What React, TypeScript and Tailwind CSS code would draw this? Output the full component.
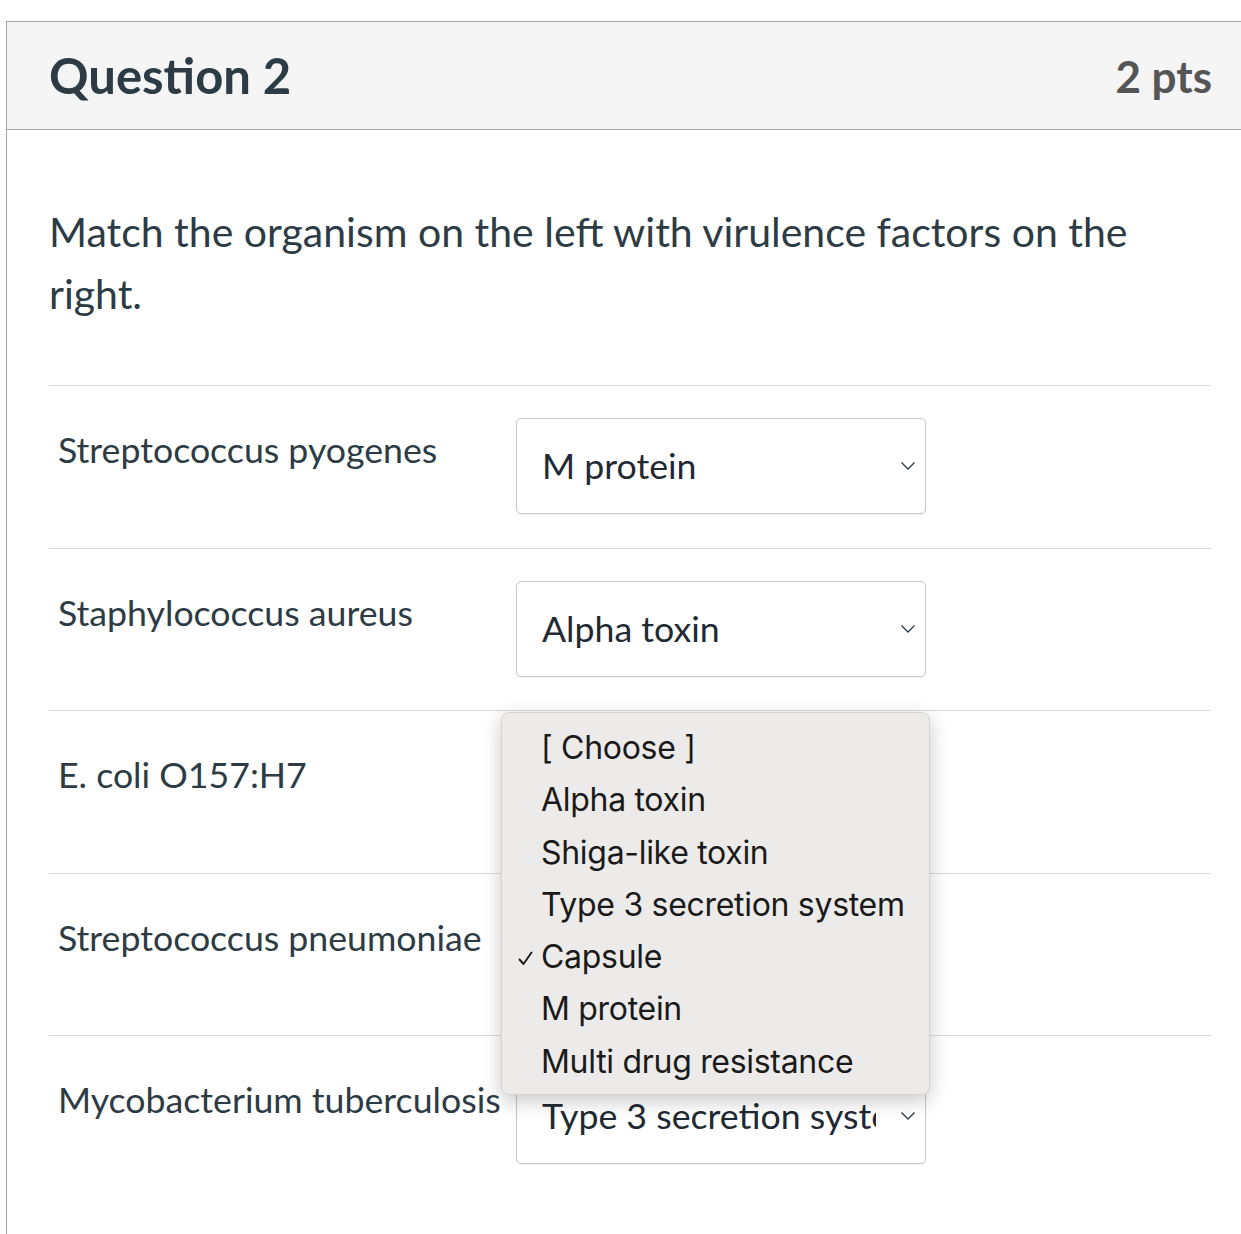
import React from 'react';

const rows = [
  { label: 'Streptococcus pyogenes', value: 'M protein' },
  { label: 'Staphylococcus aureus', value: 'Alpha toxin' },
  { label: 'E. coli O157:H7', value: 'Shiga-like toxin' },
  { label: 'Streptococcus pneumoniae', value: 'Capsule' },
  { label: 'Mycobacterium tuberculosis', value: 'Type 3 secretion system' },
];

const options = [
  '[ Choose ]',
  'Alpha toxin',
  'Shiga-like toxin',
  'Type 3 secretion system',
  'Capsule',
  'M protein',
  'Multi drug resistance',
];

const Chevron = () => (
  <svg className="w-[16px] h-[10px]" viewBox="0 0 16 10" fill="none" stroke="#2d3b45" strokeWidth="1.3">
    <path d="M1.5 1.5 L8 8 L14.5 1.5" />
  </svg>
);

const Menu = () => (
  <div className="absolute left-[-15px] top-[-31px] w-[429px] h-[383px] bg-[#ecebea] rounded-[8px] border border-[#d6d5d4] shadow-[0_6px_20px_rgba(0,0,0,0.22)] pt-[12px] z-10 font-['Inter',sans-serif] text-[32px] text-[#1a1a1a]">
    {options.map((o) => (
      <div key={o} className="relative h-[52.3px] leading-[46px] pl-[39px] tracking-[-0.3px]">
        {o === 'Capsule' && (
          <svg className="absolute left-[16px] top-[17px] w-[15px] h-[15px]" viewBox="0 0 15 15" fill="none" stroke="#1a1a1a" strokeWidth="1.9" strokeLinecap="round" strokeLinejoin="round">
            <path d="M1.5 8.5 L5.5 13 L13.5 1.5" />
          </svg>
        )}
        {o}
      </div>
    ))}
  </div>
);

export default function App() {
  return (
    <div className="bg-white w-[1241px] h-[1234px] overflow-hidden pl-[6px] pt-[21px] font-['Lato',sans-serif] text-[#2d3b45]">
      <div className="border-l border-t border-[#a4a4a4] w-[1260px] h-[1300px]">
        <div className="h-[108px] bg-[#f5f5f5] border-b border-[#a9a9a9] flex items-center justify-between pl-[42px] pr-[56px]">
          <h2 className="text-[49px] font-bold text-[#2d3b45] leading-none">Question 2</h2>
          <span className="text-[44px] font-bold text-[#555555] leading-none w-[200px] text-right mr-[-2px]">2 pts</span>
        </div>
        <div className="pl-[42px] w-[1204px]">
          <p className="pt-[71px] max-w-[1140px] text-[41px] leading-[62px] text-[#2d3b45]">
            Match the organism on the left with virulence factors on the right.
          </p>
          <div className="mt-[60px]">
            {rows.map((r, i) => (
              <div key={r.label} className="h-[162.5px] border-t border-[#dadada] flex">
                <div className="w-[467px] pl-[9px] pt-[42px] text-[35.7px] leading-[44px] whitespace-nowrap">
                  {r.label}
                </div>
                <div className="relative pt-[32px]">
                  <div className="w-[410px] h-[96px] rounded-[5px] border border-[#c8c8c8] bg-white flex items-center pl-[25px] pr-[9px] shadow-[0_1px_2px_rgba(0,0,0,0.06)]">
                    <span className="w-[334px] text-[35.7px] text-[#1f2a33] whitespace-nowrap overflow-hidden">{r.value}</span>
                    <span className="ml-auto shrink-0"><Chevron /></span>
                  </div>
                  {i === 2 && (
                    <div className="absolute left-0 top-[32px]">
                      <Menu />
                    </div>
                  )}
                </div>
              </div>
            ))}
          </div>
        </div>
      </div>
    </div>
  );
}
